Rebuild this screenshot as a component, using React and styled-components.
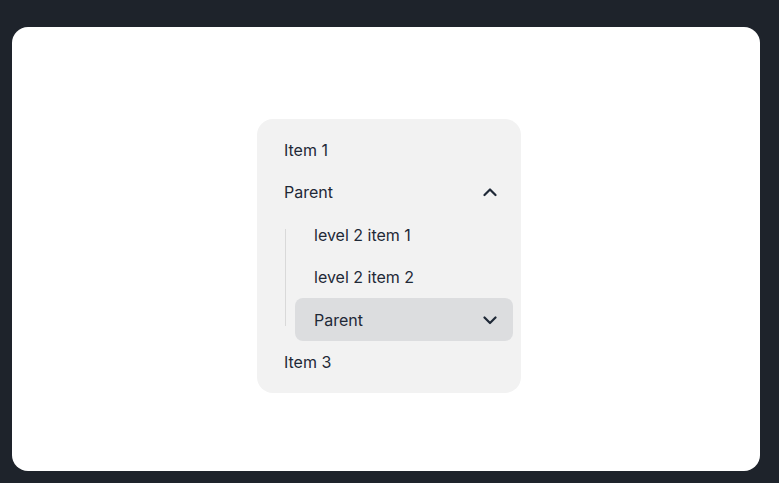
import React from "react";
import styled, { createGlobalStyle } from "styled-components";

const GlobalStyle = createGlobalStyle`
  html, body {
    margin: 0;
    padding: 0;
    background: #1e232b;
  }
  body {
    font-family: Inter, "Noto Sans", sans-serif;
    -webkit-font-smoothing: antialiased;
  }
`;

const Page = styled.div`
  width: 779px;
  height: 483px;
  box-sizing: border-box;
  padding: 27px 19px 12px 12px;
  display: flex;
`;

const Card = styled.div`
  flex: 1;
  background: #ffffff;
  border-radius: 16px;
  display: flex;
  align-items: center;
  justify-content: center;
  padding: 14px 0 0 6px;
`;

const Menu = styled.ul`
  list-style: none;
  margin: 0;
  width: 264px;
  height: 274px;
  box-sizing: border-box;
  padding: 10px 8px;
  background: #f2f2f2;
  border-radius: 16px;
  display: flex;
  flex-direction: column;
`;

const SubMenu = styled.ul`
  list-style: none;
  position: relative;
  margin: 0 0 0 20px;
  padding: 0 0 0 10px;
  display: flex;
  flex-direction: column;

  &::before {
    content: "";
    position: absolute;
    left: 0;
    top: 15px;
    bottom: 15px;
    width: 1px;
    background: #d9d9d9;
  }
`;

const Item = styled.li`
  display: flex;
  align-items: center;
  justify-content: space-between;
  height: 42.4px;
  box-sizing: border-box;
  padding: 0 16px 0 19px;
  border-radius: 8px;
  font-size: 16px;
  color: #1f2937;
  background: ${(p) => (p.$active ? "#dcdddf" : "transparent")};
`;

const Chevron = ({ up }) => (
  <svg width="14" height="14" viewBox="0 0 14 14" fill="none">
    <polyline
      points={up ? "1.5,10 7,4.5 12.5,10" : "1.5,4.5 7,10 12.5,4.5"}
      stroke="#1f2937"
      strokeWidth="2.2"
      strokeLinecap="round"
      strokeLinejoin="round"
    />
  </svg>
);

export default function App() {
  return (
    <>
      <GlobalStyle />
      <Page>
        <Card>
          <Menu>
            <Item>Item 1</Item>
            <Item>
              Parent
              <Chevron up />
            </Item>
            <SubMenu>
              <Item>level 2 item 1</Item>
              <Item>level 2 item 2</Item>
              <Item $active>
                Parent
                <Chevron />
              </Item>
            </SubMenu>
            <Item>Item 3</Item>
          </Menu>
        </Card>
      </Page>
    </>
  );
}
